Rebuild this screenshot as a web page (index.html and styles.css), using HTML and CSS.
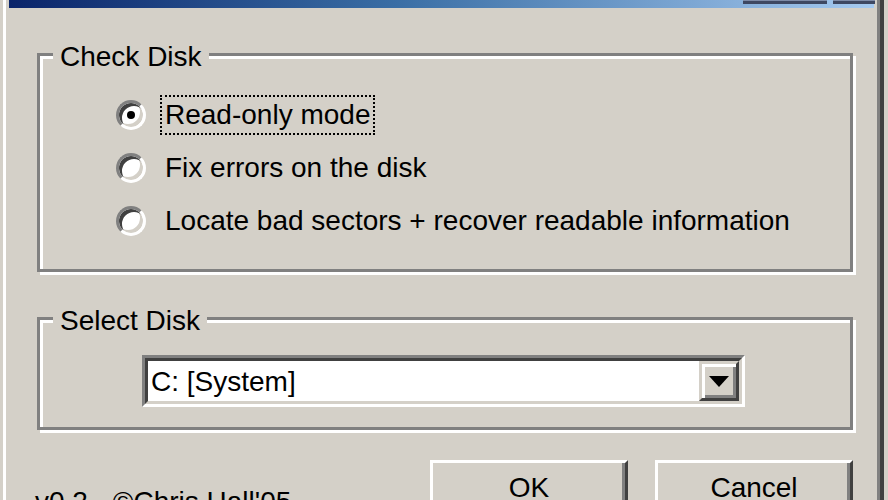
FILE: index.html
```html
<!DOCTYPE html>
<html lang="en">
<head>
  <meta charset="UTF-8">
  <title>Check Disk</title>
  <link rel="stylesheet" href="styles.css">
</head>
<body>

<div class="window">
  <div class="frame">
    <div class="titlebar">
      <div class="title-buttons">
        <span class="title-btn"></span>
        <span class="title-btn"></span>
        <span class="title-btn close"></span>
      </div>
    </div>

    <div class="client">
      <fieldset class="group">
        <legend>Check Disk</legend>
        <div class="options">
          <div class="option">
            <span class="radio checked"></span>
            <span class="option-label focused">Read-only mode</span>
          </div>
          <div class="option">
            <span class="radio"></span>
            <span class="option-label">Fix errors on the disk</span>
          </div>
          <div class="option">
            <span class="radio"></span>
            <span class="option-label">Locate bad sectors + recover readable information</span>
          </div>
        </div>
      </fieldset>

      <fieldset class="group group-disk">
        <legend>Select Disk</legend>
        <div class="disk-row">
          <div class="combo">
            <div class="combo-field">
              <span class="combo-text">C: [System]</span>
              <span class="combo-btn"><span class="arrow"></span></span>
            </div>
          </div>
        </div>
      </fieldset>

      <div class="bottom-row">
        <span class="version">v0.2 - ©Chris Hall'05</span>
        <button class="push">OK</button>
        <button class="push">Cancel</button>
      </div>
    </div>
  </div>
</div>

</body>
</html>
```

FILE: styles.css
```css
body {
  margin: 0;
  padding: 0;
  background: #d4d0c8;
  font-family: "Liberation Sans", Arial, sans-serif;
  font-size: 28px;
  color: #000;
  overflow: hidden;
  height: 500px;
}
.window {
  width: 884px;
  height: 540px;
  box-sizing: border-box;
  border-left: 3px solid #d4d0c8;
  border-right: 4px solid #404040;
}
.frame {
  height: 100%;
  box-sizing: border-box;
  border-left: 3px solid #fff;
  border-right: 3px solid #808080;
  padding: 0 3px;
}
.titlebar {
  height: 8px;
  background: linear-gradient(to right, #0a246a, #3a6ea5 45%, #a6caf0);
  display: flex;
  justify-content: flex-end;
  align-items: flex-start;
}
.title-buttons {
  display: flex;
  margin-right: -1px;
}
.title-btn {
  width: 42px;
  height: 4px;
  background: #3e4862;
  border-top: 1px solid #7d8aa6;
  box-sizing: border-box;
}
.title-btn.close {
  margin-left: 6px;
}
.client {
  padding-top: 27px;
}
.group {
  margin: 0 21px 0 28px;
  padding: 0;
  border: 3px solid #808080;
  box-shadow: inset 3px 3px 0 #fff, 3px 3px 0 #fff;
  min-inline-size: 0;
}
.group legend {
  margin-left: 13px;
  padding: 6px 7px 0;
  line-height: 32px;
  background: #d4d0c8;
}
.options {
  padding: 15px 0 22px 76px;
}
.option {
  display: flex;
  align-items: center;
  height: 53px;
}
.radio {
  position: relative;
  width: 30px;
  height: 30px;
  box-sizing: border-box;
  border-radius: 50%;
  border: 3px solid;
  border-color: #808080 #fff #fff #808080;
  background: #fff;
  box-shadow: inset 3px 3px 0 #404040, inset -3px -3px 0 #d4d0c8;
  flex-shrink: 0;
}
.radio.checked::after {
  content: '';
  position: absolute;
  left: 8px;
  top: 8px;
  width: 8px;
  height: 8px;
  border-radius: 50%;
  background: #000;
}
.option-label {
  margin-left: 14px;
  padding: 0 3px;
  line-height: 36px;
  border: 2px dotted transparent;
  white-space: nowrap;
}
.option-label.focused {
  border-color: #000;
}
.group-disk {
  margin-top: 27px;
}
.disk-row {
  padding: 18px 0 20px 102px;
}
.combo {
  width: 603px;
  height: 52px;
  box-sizing: border-box;
  border: 3px solid;
  border-color: #808080 #fff #fff #808080;
}
.combo-field {
  height: 100%;
  box-sizing: border-box;
  border: 3px solid;
  border-color: #404040 #d4d0c8 #d4d0c8 #404040;
  background: #fff;
  display: flex;
  align-items: center;
}
.combo-text {
  flex: 1;
  padding: 2px 0 0 3px;
}
.combo-btn {
  width: 40px;
  height: 40px;
  box-sizing: border-box;
  background: #d4d0c8;
  border: 3px solid;
  border-color: #d4d0c8 #404040 #404040 #d4d0c8;
  box-shadow: inset 3px 3px 0 #fff, inset -3px -3px 0 #808080;
  display: flex;
  align-items: center;
  justify-content: center;
}
.arrow {
  width: 0;
  height: 0;
  border-left: 10px solid transparent;
  border-right: 10px solid transparent;
  border-top: 11px solid #000;
}
.bottom-row {
  display: flex;
  align-items: flex-start;
  margin: 30px 21px 0 26px;
}
.version {
  flex: 1;
  margin-top: 26px;
  line-height: 32px;
  white-space: nowrap;
}
.push {
  width: 198px;
  height: 56px;
  margin-left: 27px;
  padding: 0;
  font-family: inherit;
  font-size: 28px;
  color: #000;
  background: #d4d0c8;
  border: 3px solid;
  border-color: #fff #404040 #404040 #fff;
  box-shadow: inset -3px -3px 0 #808080;
}
```
